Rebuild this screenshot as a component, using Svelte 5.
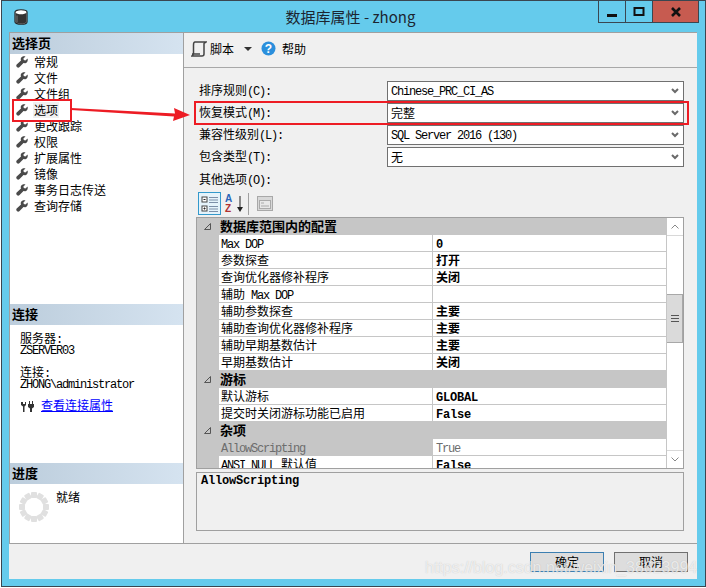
<script lang="ts">
  const pages = ['常规', '文件', '文件组', '选项', '更改跟踪', '权限', '扩展属性', '镜像', '事务日志传送', '查询存储'];

  const fields = [
    { label: '排序规则(C):', value: 'Chinese_PRC_CI_AS' },
    { label: '恢复模式(M):', value: '完整' },
    { label: '兼容性级别(L):', value: 'SQL Server 2016 (130)' },
    { label: '包含类型(T):', value: '无' }
  ];

  const groups = [
    {
      title: '数据库范围内的配置',
      rows: [
        ['Max DOP', '0'],
        ['参数探查', '打开'],
        ['查询优化器修补程序', '关闭'],
        ['辅助 Max DOP', ''],
        ['辅助参数探查', '主要'],
        ['辅助查询优化器修补程序', '主要'],
        ['辅助早期基数估计', '主要'],
        ['早期基数估计', '关闭']
      ]
    },
    {
      title: '游标',
      rows: [
        ['默认游标', 'GLOBAL'],
        ['提交时关闭游标功能已启用', 'False']
      ]
    },
    {
      title: '杂项',
      rows: [
        ['AllowScripting', 'True', 'ro'],
        ['ANSI NULL 默认值', 'False']
      ]
    }
  ];

  // latin runs get the narrow mono face, so 12px cjk and 6px latin sit together
  function parts(s: string) {
    return s.match(/[\x20-\x7e]+|[^\x20-\x7e]+/g) ?? [];
  }
  function isLatin(p: string) {
    return /^[\x20-\x7e]/.test(p);
  }

  const spokes = Array.from({ length: 12 }, (_, i) => i * 30);
</script>

{#snippet txt(s: string)}
  {#each parts(s) as p}<span class={isLatin(p) ? 'la' : 'cj'}>{p}</span>{/each}
{/snippet}

{#snippet wrench()}
  <svg class="wrench" width="12" height="12" viewBox="0 0 12 12">
    <path d="M11.6 2.4 9.4 4.4 7.8 3.9 7.4 2.4 9.5.4C7.8-.2 5.7.4 5 2c-.4.9-.3 1.7 0 2.5L.7 8.6c-.6.6-.6 1.6 0 2.2l.4.4c.7.6 1.6.6 2.2 0l4.2-4.1c1 .3 2 .2 2.9-.4 1.2-.8 1.6-2.6 1.2-4.3z" fill="#4a4a4a" />
  </svg>
{/snippet}

{#snippet chev()}
  <svg class="chev" width="8" height="6" viewBox="0 0 8 6">
    <path d="M1 1 4 4 7 1" fill="none" stroke="#6a6a6a" stroke-width="2" />
  </svg>
{/snippet}

<div class="screen">
  <div class="window">
    <div class="titlebar">
      <svg class="dbicon" width="14" height="16" viewBox="0 0 14 16">
        <path d="M1 3c0-3 12-3 12 0v10c0 3-12 3-12 0z" fill="#fff" stroke="#222" stroke-width="1.2" />
        <path d="M1.5 3.5c1 2.4 10 2.4 11 0V13c-1 2.400-10 2.400-11 0z" fill="#333" />
        <path d="M3 6.500v7" stroke="#777" stroke-width="1" />
      </svg>
      <span class="title">数据库属性 - zhong</span>
      <div class="winbtns">
        <div class="wb">
          <svg width="12" height="12" viewBox="0 0 12 12"><rect x="1" y="8" width="10" height="3" fill="#111" /></svg>
        </div>
        <div class="wb">
          <svg width="12" height="12" viewBox="0 0 12 12"><rect x="1.500" y="2" width="9" height="7" fill="none" stroke="#111" stroke-width="2" /></svg>
        </div>
        <div class="wb close">
          <svg width="12" height="12" viewBox="0 0 12 12"><path d="M2 2 10 10M10 2 2 10" stroke="#111" stroke-width="2.600" /></svg>
        </div>
      </div>
    </div>

    <div class="client">
      <div class="main">
        <aside class="left">
          <div class="head"><span>选择页</span></div>
          <ul class="pages">
            {#each pages as p}
              <li>
                {@render wrench()}
                <span class="pname" class:sel={p === '选项'}>{p}</span>
              </li>
            {/each}
          </ul>

          <div class="head"><span>连接</span></div>
          <div class="conn">
            <div class="cl">{@render txt('服务器:')}</div>
            <div class="cv">{@render txt('ZSERVER03')}</div>
            <div class="cl gap">{@render txt('连接:')}</div>
            <div class="cv">{@render txt('ZHONG\\administrator')}</div>
            <div class="linkrow">
              <svg class="plug" width="15" height="12" viewBox="0 0 15 12">
                <path d="M1 1v3l2 1.500V11h1.500V5.500L6 4V1H5v2H3V1z" fill="#333" />
                <path d="M9 0h1v3h2V0h1v3h1v3l-2 1.500V11h-2V7.500L8 6V3h1z" fill="#333" />
              </svg>
              <span class="link">查看连接属性</span>
            </div>
          </div>

          <div class="head"><span>进度</span></div>
          <div class="prog">
            <svg width="30" height="30" viewBox="0 0 30 30">
              {#each spokes as a}
                <rect x="12" y="0" width="6" height="6" rx="1" fill="#e0e0e0" transform="rotate({a} 15 15)" />
              {/each}
            </svg>
            <span class="ready">就绪</span>
          </div>
        </aside>

        <section class="right">
          <div class="toolbar">
            <svg width="16" height="16" viewBox="0 0 16 16">
              <path d="M4 1h11l-2 1.500V13c0 1-1 2-2 2H1l1.500-2V4M4 1C3 1 2.500 2 2.500 4M1 13h8" fill="none" stroke="#444" stroke-width="1.500" />
            </svg>
            <span class="tb-t">脚本</span>
            <svg class="drop" width="8" height="4" viewBox="0 0 8 4"><path d="M0 0h8L4 4z" fill="#333" /></svg>
            <svg class="help" width="15" height="15" viewBox="0 0 15 15">
              <circle cx="7.500" cy="7.500" r="7" fill="#2b8fdc" />
              <text x="7.500" y="12" text-anchor="middle" font-size="12" font-weight="700" font-family="Liberation Sans, sans-serif" fill="#fff">?</text>
            </svg>
            <span class="tb-t">帮助</span>
          </div>

          <div class="form">
            {#each fields as f}
              <div class="frow">
                <div class="flabel">{@render txt(f.label)}</div>
                <div class="select">
                  <span class="sval">{@render txt(f.value)}</span>
                  {@render chev()}
                </div>
              </div>
            {/each}
            <div class="flabel other">{@render txt('其他选项(O):')}</div>

            <div class="gridbar">
              <div class="gb-on">
                <svg width="18" height="18" viewBox="0 0 18 18">
                  <rect x="1" y="2" width="5" height="5" fill="#fff" stroke="#444" />
                  <rect x="1" y="11" width="5" height="5" fill="#fff" stroke="#444" />
                  <path d="M2.500 4.500h2M2.500 13.500h2M3.500 12.500v2" stroke="#222" />
                  <path d="M8 2.500h9M8 5h9M8 7.500h9M8 11.500h9M8 14h9M8 16.500h9" stroke="#7d8fa8" />
                </svg>
              </div>
              <div class="az">
                <span class="a">A</span>
                <span class="z">Z</span>
                <svg width="6" height="16" viewBox="0 0 6 16"><path d="M3 0v13" stroke="#222" /><path d="M0 11h6l-3 5z" fill="#222" /></svg>
              </div>
              <div class="sep"></div>
              <svg width="16" height="15" viewBox="0 0 16 15">
                <rect x=".5" y=".5" width="15" height="14" fill="#d8d8d8" stroke="#a8a8a8" />
                <rect x="2.500" y="4.500" width="11" height="8" fill="#e8e8e8" stroke="#aaa" />
                <path d="M4 7h3M4 10h8" stroke="#aaa" />
              </svg>
            </div>

            <div class="grid">
              <div class="gbody">
                {#each groups as g}
                  <div class="cat">
                    <svg class="tri" width="7" height="7" viewBox="0 0 7 7"><path d="M6.500.5v6h-6z" fill="none" stroke="#555" /></svg>
                    <span class="ctitle">{g.title}</span>
                  </div>
                  {#each g.rows as r}
                    <div class="row" class:ro={r[2] === 'ro'}>
                      <div class="rname">{@render txt(r[0])}</div>
                      <div class="rval">{@render txt(r[1])}</div>
                    </div>
                  {/each}
                {/each}
              </div>
              <div class="sbar">
                <div class="sb-btn">
                  <svg width="8" height="5" viewBox="0 0 8 5"><path d="M.5 4.500 4 1l3.500 3.500" fill="none" stroke="#888" /></svg>
                </div>
                <div class="sb-track">
                  <div class="thumb">
                    <svg width="8" height="7" viewBox="0 0 8 7"><path d="M0 .5h8M0 3.500h8M0 6.500h8" stroke="#555" /></svg>
                  </div>
                </div>
                <div class="sb-btn">
                  <svg width="8" height="5" viewBox="0 0 8 5"><path d="M.5.5 4 4 7.500.5" fill="none" stroke="#888" /></svg>
                </div>
              </div>
            </div>

            <div class="desc">AllowScripting</div>
          </div>
        </section>
      </div>

      <div class="footer">
        <button class="btn def">确定</button>
        <button class="btn">取消</button>
      </div>
    </div>
  </div>

  <!-- annotations drawn over the dialog -->
  <div class="mark m1"></div>
  <div class="mark m2"></div>
  <svg class="arrow" width="122" height="16" viewBox="0 0 122 16">
    <path d="M0 1 104 6.500 103 1 119 8 102 14 103 9.500 0 3z" fill="#ed1c24" />
  </svg>
  <div class="wm">https://blog.csdn.net/weixin_38623994</div>
</div>

<style>
  :global(body) {
    margin: 0;
    background: #fff;
  }

  .screen {
    position: relative;
    width: 706px;
    height: 588px;
    overflow: hidden;
    font-family: "Noto Sans CJK SC", sans-serif;
    font-size: 12px;
    color: #000;
  }

  .window {
    box-sizing: border-box;
    width: 705px;
    height: 587px;
    margin-left: 1px;
    display: flex;
    flex-direction: column;
    background: #65cbec;
    border: 1px solid #3a4650;
    padding: 0 8px 7px 7px;
  }

  .titlebar {
    position: relative;
    height: 31px;
    flex: none;
    display: flex;
    align-items: center;
    justify-content: center;
  }

  .dbicon {
    position: absolute;
    left: 5px;
    top: 8px;
  }

  .title {
    font-size: 15px;
    color: #1c2530;
    margin-right: 5px;
  }

  .winbtns {
    position: absolute;
    right: -2px;
    top: 0;
    height: 21px;
    display: flex;
    border: 1px solid #3a4650;
    border-top: none;
  }

  .wb {
    width: 26px;
    display: flex;
    align-items: center;
    justify-content: center;
    border-right: 1px solid #3a4650;
  }

  .close {
    width: 45px;
    background: #c75b50;
    border-right: none;
  }

  .client {
    flex: 1;
    min-height: 0;
    display: flex;
    flex-direction: column;
    background: #f0f0f0;
  }

  .main {
    flex: 1;
    min-height: 0;
    display: flex;
    border-top: 1px solid #a0a0a0;
    border-bottom: 1px solid #a0a0a0;
  }

  .left {
    box-sizing: border-box;
    width: 175px;
    flex: none;
    display: flex;
    flex-direction: column;
    background: #fff;
    border-left: 1px solid #a0a0a0;
    border-right: 1px solid #a0a0a0;
  }

  .head {
    height: 21px;
    flex: none;
    display: flex;
    align-items: center;
    padding-left: 2px;
    font-size: 13px;
    font-weight: 700;
    background: linear-gradient(to right, #bccddc, #d5e3f0);
  }

  .head span {
    margin-top: -3px;
  }

  .pages {
    list-style: none;
    margin: 0;
    padding: 0;
    flex: 1;
  }

  .pages li {
    height: 16px;
    display: flex;
    align-items: center;
    padding-left: 6px;
  }

  .wrench {
    flex: none;
    margin-right: 5px;
  }

  .pname {
    line-height: 16px;
    padding: 0 1px;
    background: #fff;
  }

  .pname.sel {
    background: #f0f0f0;
  }

  .conn {
    height: 138px;
    flex: none;
    box-sizing: border-box;
    padding: 5px 0 0 10px;
  }

  .cl {
    line-height: 15px;
    height: 13px;
  }

  .cl.gap {
    margin-top: 10px;
  }

  .cv {
    line-height: 11px;
    height: 11px;
  }

  .linkrow {
    display: flex;
    align-items: center;
    gap: 6px;
    margin-top: 7px;
    height: 18px;
  }

  .plug {
    margin-top: 5px;
  }

  .link {
    color: #0000ff;
    text-decoration: underline;
  }

  .prog {
    height: 59px;
    flex: none;
    box-sizing: border-box;
    padding: 8px 0 0 9px;
    display: flex;
    align-items: flex-start;
    gap: 7px;
  }

  .ready {
    line-height: 16px;
    margin-top: -3px;
  }

  .right {
    flex: 1;
    min-width: 0;
    display: flex;
    flex-direction: column;
  }

  .toolbar {
    height: 35px;
    flex: none;
    box-sizing: border-box;
    border-bottom: 1px solid #a8a8a8;
    display: flex;
    align-items: center;
    padding: 0 0 3px 7px;
  }

  .tb-t {
    margin-left: 3px;
  }

  .drop {
    margin-left: 10px;
  }

  .help {
    margin-left: 9px;
    margin-right: 3px;
  }

  .form {
    flex: 1;
    min-height: 0;
    padding: 13px 13px 0 13px;
    display: flex;
    flex-direction: column;
  }

  .frow {
    display: flex;
    height: 20px;
    margin-bottom: 2px;
  }

  .flabel {
    width: 188px;
    flex: none;
    margin-left: 2px;
    line-height: 18px;
    white-space: nowrap;
  }

  .other {
    height: 21px;
    line-height: 20px;
  }

  .select {
    box-sizing: border-box;
    flex: 1;
    border: 1px solid #707070;
    background: #fff;
    display: flex;
    align-items: center;
    justify-content: space-between;
    padding: 0 4px 0 3px;
  }

  .sval {
    line-height: 18px;
    white-space: pre;
  }

  .la {
    font-family: "Liberation Mono", monospace;
    font-size: 12px;
    letter-spacing: -1.2px;
    white-space: pre;
  }

  .gridbar {
    height: 23px;
    margin: 2px 0 2px 1px;
    display: flex;
    align-items: center;
    flex: none;
  }

  .gb-on {
    box-sizing: border-box;
    width: 23px;
    height: 23px;
    border: 1px solid #3399cc;
    background: #e5f3fb;
    display: flex;
    align-items: center;
    justify-content: center;
  }

  .az {
    position: relative;
    width: 19px;
    height: 23px;
    margin-left: 3px;
    display: flex;
    justify-content: flex-end;
    align-items: center;
    font-family: "Liberation Sans", sans-serif;
    font-size: 10px;
    font-weight: 700;
  }

  .az .a {
    position: absolute;
    left: 1px;
    top: 1px;
    color: #2a64b8;
  }

  .az .z {
    position: absolute;
    left: 1px;
    top: 11px;
    color: #b03030;
  }

  .sep {
    width: 1px;
    height: 22px;
    background: #a0a0a0;
    margin: 0 8px 0 5px;
  }

  .grid {
    box-sizing: border-box;
    height: 252px;
    flex: none;
    margin-left: -1px;
    display: flex;
    border: 1px solid #a0a0a0;
    background: #fff;
  }

  .gbody {
    flex: 1;
    min-width: 0;
    overflow: hidden;
  }

  .cat {
    box-sizing: border-box;
    height: 17px;
    background: #c6c6c6;
    display: flex;
    align-items: center;
  }

  .tri {
    margin-left: 7px;
    margin-right: 9px;
    flex: none;
  }

  .ctitle {
    font-size: 13px;
    font-weight: 700;
    line-height: 17px;
    margin-top: -3px;
  }

  .row {
    box-sizing: border-box;
    height: 17px;
    display: flex;
    background: #c6c6c6;
    padding-left: 22px;
  }

  .rname,
  .rval {
    box-sizing: border-box;
    background: #fff;
    border-bottom: 1px solid #c6c6c6;
    line-height: 16px;
    white-space: pre;
    overflow: hidden;
  }

  .rname {
    width: 214px;
    flex: none;
    padding-left: 2px;
    border-right: 1px solid #c6c6c6;
  }

  .rval {
    flex: 1;
    padding-left: 3px;
    font-weight: 700;
  }

  .rval .la {
    letter-spacing: -0.2px;
  }

  .row.ro .rname {
    background: #c6c6c6;
    color: #6d6d6d;
    border-bottom-color: #c6c6c6;
  }

  .row.ro .rval {
    color: #6d6d6d;
    font-weight: 400;
  }

  .row.ro .rval .la {
    letter-spacing: -1.2px;
  }

  .sbar {
    width: 17px;
    flex: none;
    display: flex;
    flex-direction: column;
    border-left: 1px solid #c6c6c6;
    box-sizing: border-box;
  }

  .sb-btn {
    height: 17px;
    flex: none;
    display: flex;
    align-items: center;
    justify-content: center;
  }

  .sb-track {
    flex: 1;
    padding-top: 58px;
    border-top: 1px solid #d8d8d8;
    border-bottom: 1px solid #d8d8d8;
  }

  .thumb {
    height: 49px;
    box-sizing: border-box;
    background: #dadada;
    border-top: 1px solid #a8a8a8;
    border-bottom: 1px solid #a8a8a8;
    border-right: 1px solid #a8a8a8;
    display: flex;
    align-items: center;
    justify-content: center;
  }

  .desc {
    box-sizing: border-box;
    height: 59px;
    flex: none;
    margin: 3px 0 0 -1px;
    border: 1px solid #a0a0a0;
    padding: 1px 4px;
    font-family: "Liberation Mono", monospace;
    font-size: 12px;
    font-weight: 700;
    letter-spacing: -0.2px;
    line-height: 14px;
  }

  .footer {
    box-sizing: border-box;
    height: 35px;
    flex: none;
    display: flex;
    justify-content: flex-end;
    align-items: flex-start;
    gap: 10px;
    padding: 8px 9px 0 0;
  }

  .btn {
    box-sizing: border-box;
    width: 74px;
    height: 20px;
    padding: 0;
    border: 1px solid #707070;
    background: #dddddd;
    font: inherit;
    line-height: 18px;
    color: #000;
  }

  .btn.def {
    border-color: #3c7fb1;
  }

  .mark {
    position: absolute;
    box-sizing: border-box;
    border: 2px solid #ed1c24;
    pointer-events: none;
  }

  .m1 {
    left: 12px;
    top: 99px;
    width: 60px;
    height: 23px;
  }

  .m2 {
    left: 194px;
    top: 101px;
    width: 495px;
    height: 24px;
  }

  .arrow {
    position: absolute;
    left: 71px;
    top: 107px;
  }

  .wm {
    position: absolute;
    left: 425px;
    top: 559px;
    font-family: "Liberation Sans", sans-serif;
    font-size: 16px;
    color: rgba(255, 255, 255, 0.7);
    text-shadow: 0 0 1px rgba(120, 120, 120, 0.4);
    white-space: nowrap;
  }
</style>
